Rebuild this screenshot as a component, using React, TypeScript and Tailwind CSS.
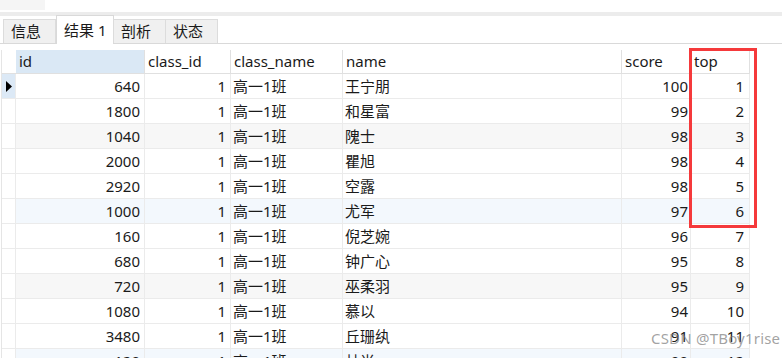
import { Fragment } from 'react';

type Row = { id: number; classId: number; className: string; name: string; score: number; top: number };

const rows: Row[] = [
  { id: 640, classId: 1, className: '高一1班', name: '王宁朋', score: 100, top: 1 },
  { id: 1800, classId: 1, className: '高一1班', name: '和星富', score: 99, top: 2 },
  { id: 1040, classId: 1, className: '高一1班', name: '隗士', score: 98, top: 3 },
  { id: 2000, classId: 1, className: '高一1班', name: '瞿旭', score: 98, top: 4 },
  { id: 2920, classId: 1, className: '高一1班', name: '空露', score: 98, top: 5 },
  { id: 1000, classId: 1, className: '高一1班', name: '尤军', score: 97, top: 6 },
  { id: 160, classId: 1, className: '高一1班', name: '倪芝婉', score: 96, top: 7 },
  { id: 680, classId: 1, className: '高一1班', name: '钟广心', score: 95, top: 8 },
  { id: 720, classId: 1, className: '高一1班', name: '巫柔羽', score: 95, top: 9 },
  { id: 1080, classId: 1, className: '高一1班', name: '慕以', score: 94, top: 10 },
  { id: 3480, classId: 1, className: '高一1班', name: '丘珊纨', score: 91, top: 11 },
  { id: 120, classId: 1, className: '高一1班', name: '林尚', score: 90, top: 12 },
];

const tabs = ['信息', '结果 1', '剖析', '状态'];

// every third row is tinted, alternating grey / blue
function rowBg(i: number) {
  if (i % 6 === 2) return 'bg-[#f7f7f7]';
  if (i % 6 === 5) return 'bg-[#f3f8fd]';
  return 'bg-white';
}

const cell = 'h-[25px] flex items-center border-r border-b border-[#ebebeb] whitespace-nowrap overflow-hidden';

export default function App() {
  return (
    <div
      className="relative w-[782px] h-[358px] overflow-hidden bg-white text-[15px] text-[#1a1a1a]"
      style={{ fontFamily: '"Noto Sans", "Noto Sans CJK SC", sans-serif' }}
    >
      {/* top strip */}
      <div className="h-[12px] flex">
        <div className="w-[45px] h-[10px] bg-[#f5f5f5]" />
      </div>
      <div className="h-[4px] bg-[#ececec]" />

      {/* tab bar */}
      <div className="h-[28px] flex items-end border-b border-[#d9d9d9] pl-[3px]">
        {tabs.map((t, i) =>
          i === 1 ? (
            <div
              key={t}
              className="w-[58px] h-[29px] -mb-px flex items-center pl-[7px] bg-white border border-b-0 border-[#d9d9d9] leading-none"
            >
              {t}
            </div>
          ) : (
            <div
              key={t}
              className="w-[53px] h-[24px] flex items-center pl-[7px] bg-[#f0f0f0] border border-b-0 border-[#dcdcdc] -ml-px first:ml-0 leading-none"
            >
              {t}
            </div>
          )
        )}
      </div>

      {/* grid */}
      <div className="mt-[6px] ml-px border-l border-[#e5e5e5] grid grid-cols-[14px_129px_86px_112px_279px_69px_59px] w-[749px]">
        <div className="h-[24px] border-b border-[#e0e0e0]" />
        <div className="h-[24px] flex items-center pl-[3px] bg-[#dae8f5] border-r border-b border-[#e0e0e0]">id</div>
        <div className="h-[24px] flex items-center pl-[3px] border-r border-b border-[#e0e0e0]">class_id</div>
        <div className="h-[24px] flex items-center pl-[3px] border-r border-b border-[#e0e0e0]">class_name</div>
        <div className="h-[24px] flex items-center pl-[3px] border-r border-b border-[#e0e0e0]">name</div>
        <div className="h-[24px] flex items-center pl-[3px] border-r border-b border-[#e0e0e0]">score</div>
        <div className="h-[24px] flex items-center pl-[3px] border-r border-b border-[#e0e0e0]">top</div>

        {rows.map((r, i) => (
          <Fragment key={r.id}>
            <div className={`${cell} justify-center ${i === 0 ? 'bg-[#dce9f6]' : 'bg-white'}`}>
              {i === 0 && (
                <svg width="6" height="11" viewBox="0 0 6 11">
                  <path d="M0 0 L6 5.5 L0 11 Z" fill="#000" />
                </svg>
              )}
            </div>
            <div className={`${cell} ${rowBg(i)} justify-end pr-[4px]`}>{r.id}</div>
            <div className={`${cell} ${rowBg(i)} justify-end pr-[4px]`}>{r.classId}</div>
            <div className={`${cell} ${rowBg(i)} pl-[2px]`}>{r.className}</div>
            <div className={`${cell} ${rowBg(i)} pl-[2px]`}>{r.name}</div>
            <div className={`${cell} ${rowBg(i)} justify-end pr-[2px]`}>{r.score}</div>
            <div className={`${cell} ${rowBg(i)} justify-end pr-[5px]`}>{r.top}</div>
          </Fragment>
        ))}
      </div>

      {/* highlight box around the top column */}
      <div className="absolute left-[689px] top-[48px] w-[68px] h-[180px] border-[3px] border-[#f5393b]" />

      {/* watermark */}
      <div className="absolute left-[651px] top-[331px] text-[15px] text-[#7a7a7a]/70 leading-none tracking-[0.2px]">
        CSDN @TBoy1rise
      </div>
    </div>
  );
}
